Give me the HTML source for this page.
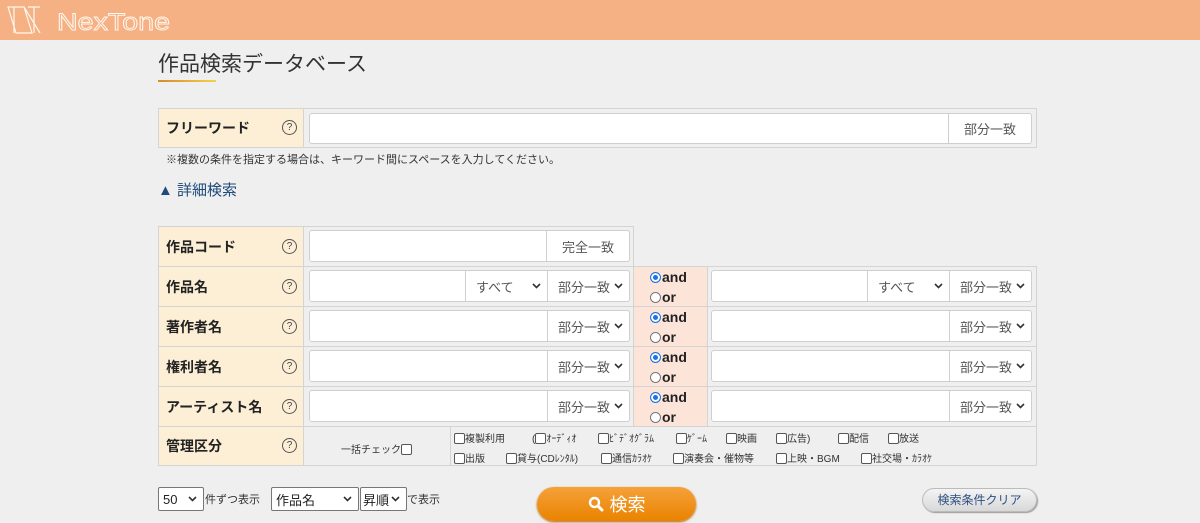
<!DOCTYPE html><html><head><meta charset="utf-8"><style>
*{margin:0;padding:0;box-sizing:border-box}
body{width:1200px;height:523px;background:#efefef;font-family:"Liberation Sans","Noto Sans CJK JP",sans-serif;position:relative;overflow:hidden;color:#333}
.a{position:absolute}
.hd{left:0;top:0;width:1200px;height:40px;background:#f5b084}
.lab{background:#fcefd6;border:1px solid #d4d4d4;font-weight:bold;font-size:14px;color:#222;padding-left:7px;display:flex;align-items:center}
.cell{border:1px solid #d4d4d4;background:#efefef}
.q{position:absolute;right:6px;top:50%;margin-top:-8px;width:15px;height:15px;border:1px solid #555;border-radius:50%;font-size:10px;text-align:center;line-height:13px;font-weight:normal;color:#444}
.box{background:#fff;border:1px solid #cfcfcf;border-radius:3px;font-size:13px;color:#555;display:flex;align-items:center;justify-content:center}
.sel{justify-content:flex-start;padding-left:10px}
.sel svg{position:absolute;right:6px;top:50%;margin-top:-3px}
.ao{background:#fde4d8;border:1px solid #d4d4d4;font-weight:bold;font-size:14px;color:#222;padding-left:16px;line-height:20px}
.r{display:inline-block;width:11px;height:11px;border-radius:50%;border:1px solid #777;vertical-align:-1px;margin-right:1px;background:#fff}
.r.on{background:#1a73e8;border-color:#1a73e8;box-shadow:inset 0 0 0 2px #fff}
.cb{display:inline-block;width:11px;height:11px;border:1px solid #555;background:#fff;vertical-align:-2px;border-radius:2px}
.ck{font-size:10px;color:#333;white-space:nowrap}
</style></head><body>
<div class="a hd"></div>
<svg class="a" style="left:0;top:4px" width="180" height="32" viewBox="0 0 180 32" fill="none" stroke="#fff8ee" stroke-width="1.2">
<path d="M8 3H24L32 29H16Z M8 3L16 29 M24 3L40 29 M14 3V29 M34 3V29 M40 3H28"/>
<text x="57" y="26" font-family="Liberation Sans" font-size="24" fill="none" stroke="#fff8ee" stroke-width="0.9" textLength="113" lengthAdjust="spacingAndGlyphs">NexTone</text>
</svg>
<div class="a" style="left:158px;top:48px;font-size:21px;color:#333">作品検索データベース</div>
<div class="a" style="left:158px;top:80px;width:58px;height:2px;background:linear-gradient(90deg,#d98a2b,#f2d24a)"></div>

<div class="a lab" style="left:158px;top:108px;width:146px;height:40px">フリーワード<span class="q">?</span></div>
<div class="a cell" style="left:303px;top:108px;width:734px;height:40px"></div>
<div class="a box" style="left:309px;top:113px;width:640px;height:31px;border-radius:3px 0 0 3px"></div>
<div class="a box" style="left:948px;top:113px;width:84px;height:31px;border-radius:0 3px 3px 0">部分一致</div>
<div class="a" style="left:166px;top:151px;font-size:11px;color:#333">※複数の条件を指定する場合は、キーワード間にスペースを入力してください。</div>
<div class="a" style="left:158px;top:179px;font-size:15px;color:#1d4b7a">▲ 詳細検索</div>

<div class="a lab" style="left:158px;top:226px;width:146px;height:41px">作品コード<span class="q">?</span></div>
<div class="a cell" style="left:303px;top:226px;width:331px;height:41px"></div>
<div class="a box" style="left:309px;top:230px;width:238px;height:32px;border-radius:3px 0 0 3px"></div>
<div class="a box" style="left:546px;top:230px;width:84px;height:32px;border-radius:0 3px 3px 0">完全一致</div>

<div id="rows"></div>
<script>
const chev='<svg width="9" height="6" viewBox="0 0 9 6"><path d="M1 1L4.5 4.5L8 1" stroke="#333" stroke-width="1.6" fill="none"/></svg>';
let h='';
const names=['作品名','著作者名','権利者名','アーティスト名'];
names.forEach((n,i)=>{
 const t=266+i*40;
 h+=`<div class="a lab" style="left:158px;top:${t}px;width:146px;height:41px">${n}<span class="q">?</span></div>`;
 h+=`<div class="a cell" style="left:303px;top:${t}px;width:331px;height:41px"></div>`;
 h+=`<div class="a ao" style="left:633px;top:${t}px;width:75px;height:41px"><span class="r on"></span>and<br><span class="r"></span>or</div>`;
 h+=`<div class="a cell" style="left:707px;top:${t}px;width:330px;height:41px"></div>`;
 [309,711].forEach(x=>{
  if(i==0){
   h+=`<div class="a box" style="left:${x}px;top:${t+4}px;width:157px;height:32px;border-radius:3px 0 0 3px"></div>`;
   h+=`<div class="a box sel" style="left:${x+156}px;top:${t+4}px;width:83px;height:32px;border-radius:0">すべて${chev}</div>`;
  }else{
   h+=`<div class="a box" style="left:${x}px;top:${t+4}px;width:239px;height:32px;border-radius:3px 0 0 3px"></div>`;
  }
  h+=`<div class="a box sel" style="left:${x+238}px;top:${t+4}px;width:83px;height:32px;border-radius:0 3px 3px 0">部分一致${chev}</div>`;
 });
});
document.getElementById('rows').outerHTML=h;
</script>

<div class="a lab" style="left:158px;top:426px;width:146px;height:40px">管理区分<span class="q">?</span></div>
<div class="a cell" style="left:303px;top:426px;width:148px;height:40px;font-size:10px;padding:14px 0 0 37px">一括チェック<span class="cb"></span></div>
<div class="a cell" style="left:450px;top:426px;width:587px;height:40px"></div>
<div class="a ck" style="left:454px;top:430px"><span class="cb"></span>複製利用</div>
<div class="a ck" style="left:532px;top:430px">(<span class="cb"></span>ｵｰﾃﾞｨｵ</div>
<div class="a ck" style="left:598px;top:430px"><span class="cb"></span>ﾋﾞﾃﾞｵｸﾞﾗﾑ</div>
<div class="a ck" style="left:676px;top:430px"><span class="cb"></span>ｹﾞｰﾑ</div>
<div class="a ck" style="left:726px;top:430px"><span class="cb"></span>映画</div>
<div class="a ck" style="left:776px;top:430px"><span class="cb"></span>広告)</div>
<div class="a ck" style="left:838px;top:430px"><span class="cb"></span>配信</div>
<div class="a ck" style="left:888px;top:430px"><span class="cb"></span>放送</div>
<div class="a ck" style="left:454px;top:450px"><span class="cb"></span>出版</div>
<div class="a ck" style="left:506px;top:450px"><span class="cb"></span>貸与(CDﾚﾝﾀﾙ)</div>
<div class="a ck" style="left:601px;top:450px"><span class="cb"></span>通信ｶﾗｵｹ</div>
<div class="a ck" style="left:673px;top:450px"><span class="cb"></span>演奏会・催物等</div>
<div class="a ck" style="left:776px;top:450px"><span class="cb"></span>上映・BGM</div>
<div class="a ck" style="left:861px;top:450px"><span class="cb"></span>社交場・ｶﾗｵｹ</div>

<div class="a box sel" style="left:158px;top:487px;width:46px;height:24px;border:1px solid #777;border-radius:2px;padding-left:4px;color:#222">50<svg width="9" height="6" viewBox="0 0 9 6"><path d="M1 1L4.5 4.5L8 1" stroke="#333" stroke-width="1.6" fill="none"/></svg></div>
<div class="a" style="left:205px;top:491px;font-size:11px">件ずつ表示</div>
<div class="a box sel" style="left:271px;top:487px;width:88px;height:24px;border:1px solid #777;border-radius:2px;padding-left:4px;color:#222">作品名<svg width="9" height="6" viewBox="0 0 9 6"><path d="M1 1L4.5 4.5L8 1" stroke="#333" stroke-width="1.6" fill="none"/></svg></div>
<div class="a box sel" style="left:360px;top:487px;width:47px;height:24px;border:1px solid #777;border-radius:2px;padding-left:2px;color:#222">昇順<svg width="9" height="6" viewBox="0 0 9 6"><path d="M1 1L4.5 4.5L8 1" stroke="#333" stroke-width="1.6" fill="none"/></svg></div>
<div class="a" style="left:407px;top:491px;font-size:11px">で表示</div>

<div class="a" style="left:537px;top:487px;width:159px;height:34px;border-radius:17px;background:linear-gradient(#f5a13a,#ea8300);box-shadow:0 1px 2px #b06000;color:#fff;font-size:18px;display:flex;align-items:center;justify-content:center">
<svg width="16" height="16" viewBox="0 0 16 16" style="margin-right:6px"><circle cx="6.5" cy="6.5" r="4.5" stroke="#fff" stroke-width="2.4" fill="none"/><path d="M10 10L14 14" stroke="#fff" stroke-width="3" stroke-linecap="round"/></svg>検索</div>
<div class="a" style="left:922px;top:488px;width:115px;height:24px;border-radius:12px;background:linear-gradient(#f4f4f4,#d8d8d8);border:1px solid #bbb;box-shadow:1px 1px 1px #999;color:#2b4f80;font-size:12px;text-align:center;line-height:22px">検索条件クリア</div>
</body></html>
